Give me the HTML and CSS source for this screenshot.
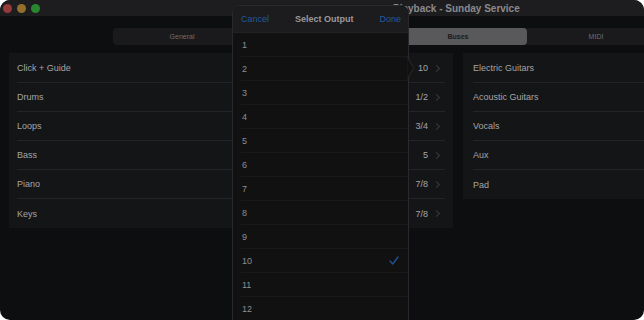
FILE: index.html
```html
<!DOCTYPE html>
<html>
<head>
<meta charset="utf-8">
<link rel="stylesheet" href="styles.css">
</head>
<body>
<div class="window">
  <div class="titlebar">
    <div class="lights">
      <span class="light red"></span>
      <span class="light yellow"></span>
      <span class="light green"></span>
    </div>
    <div class="title">Playback - Sunday Service</div>
  </div>
  <div class="content">
    <div class="segbar">
      <div class="seg">General</div>
      <div class="seg">Outputs</div>
      <div class="seg selected">Buses</div>
      <div class="seg">MIDI</div>
    </div>
    <div class="panels">
      <div class="panel left">
        <div class="row"><span class="name">Click + Guide</span><span class="val">10</span><span class="chev"></span></div>
        <div class="row"><span class="name">Drums</span><span class="val">1/2</span><span class="chev"></span></div>
        <div class="row"><span class="name">Loops</span><span class="val">3/4</span><span class="chev"></span></div>
        <div class="row"><span class="name">Bass</span><span class="val">5</span><span class="chev"></span></div>
        <div class="row"><span class="name">Piano</span><span class="val">7/8</span><span class="chev"></span></div>
        <div class="row"><span class="name">Keys</span><span class="val">7/8</span><span class="chev"></span></div>
      </div>
      <div class="panel right">
        <div class="row"><span class="name">Electric Guitars</span></div>
        <div class="row"><span class="name">Acoustic Guitars</span></div>
        <div class="row"><span class="name">Vocals</span></div>
        <div class="row"><span class="name">Aux</span></div>
        <div class="row"><span class="name">Pad</span></div>
      </div>
    </div>
  </div>

  <div class="popover">
    <svg class="arrow" width="8" height="22" viewBox="0 0 8 22">
      <path d="M0 0 L6 9.5 Q7 11 6 12.5 L0 22 Z" fill="#111112" stroke="#2a2a2c" stroke-width="1"/>
      <rect x="-1" y="0.5" width="1.5" height="21" fill="#111112"/>
    </svg>
    <div class="pop-head">
      <span class="btn">Cancel</span>
      <span class="pop-title">Select Output</span>
      <span class="btn">Done</span>
    </div>
    <div class="pop-list">
      <div class="opt">1</div>
      <div class="opt">2</div>
      <div class="opt">3</div>
      <div class="opt">4</div>
      <div class="opt">5</div>
      <div class="opt">6</div>
      <div class="opt">7</div>
      <div class="opt">8</div>
      <div class="opt">9</div>
      <div class="opt">10<svg class="check" width="10" height="9" viewBox="0 0 10 9"><path d="M1 5 L3.8 8 L9 1" fill="none" stroke="#1d5595" stroke-width="1.3" stroke-linecap="round" stroke-linejoin="round"/></svg></div>
      <div class="opt">11</div>
      <div class="opt">12</div>
    </div>
  </div>
</div>
</body>
</html>
```

FILE: styles.css
```css
* { box-sizing: border-box; }
html, body {
  margin: 0;
  padding: 0;
  background: #ffffff;
}
body {
  font-family: "Liberation Sans", Arial, sans-serif;
  width: 644px;
  height: 320px;
  overflow: hidden;
}
.window {
  position: relative;
  width: 644px;
  height: 320px;
  border-radius: 10px;
  overflow: hidden;
  background: #0d0e10;
  display: flex;
  flex-direction: column;
}
.titlebar {
  height: 16px;
  background: #1d1d20;
  display: flex;
  align-items: center;
  flex-shrink: 0;
}
.lights {
  display: flex;
  gap: 5px;
  padding-left: 3px;
}
.light {
  width: 9px;
  height: 9px;
  border-radius: 50%;
  display: block;
}
.red { background: #96393a; }
.yellow { background: #926f2a; }
.green { background: #2a8530; }
.title {
  margin-left: 353px;
  font-size: 10px;
  font-weight: bold;
  color: #8a8a8c;
  padding-top: 1px;
}
.content {
  flex: 1;
  display: flex;
  flex-direction: column;
  padding-top: 12px;
}
.segbar {
  display: flex;
  margin-left: 113px;
  height: 17px;
  background: #1a1a1c;
  border-radius: 4px;
  width: 560px;
  flex-shrink: 0;
}
.seg {
  width: 138px;
  flex-shrink: 0;
  display: flex;
  align-items: center;
  justify-content: center;
  font-size: 7px;
  color: #6e6e70;
  border-radius: 4px;
}
.seg.selected {
  background: #59595c;
  color: #1b1b1d;
  font-weight: bold;
}
.panels {
  display: flex;
  gap: 10px;
  margin-top: 8px;
  padding-left: 9px;
  align-items: flex-start;
}
.panel {
  background: #141517;
  display: flex;
  flex-direction: column;
  padding-top: 1px;
}
.panel.left {
  width: 444px;
  padding-left: 8px;
  padding-right: 8px;
}
.panel.right {
  flex: 1;
  padding-left: 10px;
}
.row {
  height: 29px;
  display: flex;
  align-items: center;
  border-bottom: 1px solid #232427;
  font-size: 9px;
  color: #a5a5a7;
}
.row:last-child { border-bottom: none; }
.name { flex: 1; }
.val {
  text-align: right;
}
.chev {
  width: 5px;
  height: 5px;
  border-top: 1px solid #3a3a3d;
  border-right: 1px solid #3a3a3d;
  transform: rotate(45deg);
  margin-left: 6px;
  margin-right: 6px;
}

.popover {
  position: absolute;
  left: 232px;
  top: 5px;
  width: 177px;
  height: 330px;
  background: #111112;
  border: 1px solid #29292b;
  border-radius: 8px 8px 0 0;
  display: flex;
  flex-direction: column;
}
.arrow {
  position: absolute;
  right: -7px;
  top: 51px;
  overflow: visible;
}
.pop-head {
  height: 27px;
  background: #1c1c1e;
  border-radius: 8px 8px 0 0;
  display: flex;
  align-items: center;
  justify-content: space-between;
  padding: 0 7px 0 8px;
  font-size: 9px;
  border-bottom: 1px solid #222224;
  flex-shrink: 0;
}
.btn { color: #1f5a9d; }
.pop-title {
  color: #9a9a9c;
  font-weight: bold;
}
.pop-list {
  display: flex;
  flex-direction: column;
}
.opt {
  height: 24px;
  margin-left: 8px;
  padding-left: 1px;
  padding-right: 9px;
  display: flex;
  align-items: center;
  justify-content: space-between;
  border-bottom: 1px solid #19191b;
  font-size: 9px;
  color: #8e8e90;
}
.check { display: block; }
```
